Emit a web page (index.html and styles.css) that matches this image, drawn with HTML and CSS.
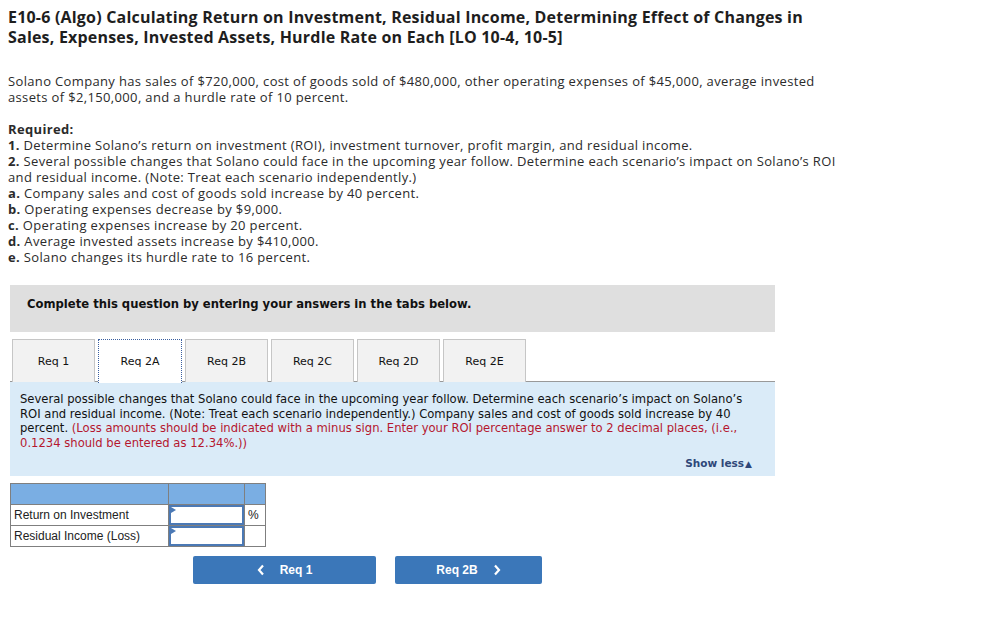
FILE: index.html
```html
<!DOCTYPE html>
<html>
<head>
<meta charset="utf-8">
<link rel="stylesheet" href="styles.css">
</head>
<body>
<h1 class="title">E10-6 (Algo) Calculating Return on Investment, Residual Income, Determining Effect of Changes in Sales, Expenses, Invested Assets, Hurdle Rate on Each [LO 10-4, 10-5]</h1>

<p class="intro">Solano Company has sales of $720,000, cost of goods sold of $480,000, other operating expenses of $45,000, average invested assets of $2,150,000, and a hurdle rate of 10 percent.</p>

<div class="required">
  <div class="req-head">Required:</div>
  <div><b>1.</b> Determine Solano’s return on investment (ROI), investment turnover, profit margin, and residual income.</div>
  <div><b>2.</b> Several possible changes that Solano could face in the upcoming year follow. Determine each scenario’s impact on Solano’s ROI and residual income. (Note: Treat each scenario independently.)</div>
  <div><b>a.</b> Company sales and cost of goods sold increase by 40 percent.</div>
  <div><b>b.</b> Operating expenses decrease by $9,000.</div>
  <div><b>c.</b> Operating expenses increase by 20 percent.</div>
  <div><b>d.</b> Average invested assets increase by $410,000.</div>
  <div><b>e.</b> Solano changes its hurdle rate to 16 percent.</div>
</div>

<div class="question">
  <div class="banner">Complete this question by entering your answers in the tabs below.</div>
  <div class="tabs">
    <div class="tab">Req 1</div>
    <div class="tab active">Req 2A</div>
    <div class="tab">Req 2B</div>
    <div class="tab">Req 2C</div>
    <div class="tab">Req 2D</div>
    <div class="tab">Req 2E</div>
  </div>
  <div class="panel">
    <p class="panel-text">Several possible changes that Solano could face in the upcoming year follow. Determine each scenario’s impact on Solano’s ROI and residual income. (Note: Treat each scenario independently.) Company sales and cost of goods sold increase by 40 percent. <span class="red">(Loss amounts should be indicated with a minus sign. Enter your ROI percentage answer to 2 decimal places, (i.e., 0.1234 should be entered as 12.34%.))</span></p>
    <div class="show-less">Show less<span class="tri">▲</span></div>
  </div>

  <table class="answers">
    <tr class="hdr"><td class="c1"></td><td class="c2"></td><td class="c3"></td></tr>
    <tr><td class="c1">Return on Investment</td><td class="c2"><div class="inp"></div></td><td class="c3">%</td></tr>
    <tr><td class="c1">Residual Income (Loss)</td><td class="c2"><div class="inp"></div></td><td class="c3"></td></tr>
  </table>

  <div class="nav">
    <div class="btn prev"><svg class="chev" width="8" height="12" viewBox="0 0 8 12"><path d="M6 1.5 L2 6 L6 10.5" fill="none" stroke="#fff" stroke-width="2.2"/></svg>Req 1</div>
    <div class="btn next">Req 2B<svg class="chev" width="8" height="12" viewBox="0 0 8 12"><path d="M2 1.5 L6 6 L2 10.5" fill="none" stroke="#fff" stroke-width="2.2"/></svg></div>
  </div>
</div>
</body>
</html>
```

FILE: styles.css
```css
html, body {
  margin: 0;
  background: #fff;
}
body {
  padding: 7px 8px 0 8px;
  font-family: "Open Sans", "Liberation Sans", sans-serif;
  color: #2b2b2b;
}
.title {
  margin: 0;
  font-size: 16px;
  line-height: 20px;
  font-weight: 700;
  color: #1e1e1e;
  letter-spacing: 0.2px;
  width: 820px;
}
.intro {
  margin: 26px 0 0 0;
  font-size: 13px;
  line-height: 16px;
  letter-spacing: 0.35px;
  width: 830px;
}
.required {
  margin-top: 16px;
  font-size: 13px;
  line-height: 16px;
  letter-spacing: 0.35px;
  width: 830px;
}
.req-head { font-weight: 700; }
.required b { font-weight: 700; }

.question {
  margin-top: 20px;
  margin-left: 2px;
  width: 765px;
  font-family: "DejaVu Sans", Verdana, sans-serif;
}
.banner {
  background: #dfdfdf;
  height: 47px;
  box-sizing: border-box;
  padding: 11px 0 0 17px;
  font-size: 11.6px;
  font-weight: 700;
  color: #111;
  line-height: 16px;
}
.tabs {
  display: flex;
  gap: 3px;
  margin-top: 7px;
  padding-left: 2px;
  border-bottom: 1px solid #999;
  height: 42px;
}
.tab {
  width: 83px;
  box-sizing: border-box;
  height: 43px;
  background: #f2f2f2;
  border: 1px solid #c6c6c6;
  border-bottom: none;
  font-size: 11px;
  color: #111;
  display: flex;
  align-items: center;
  justify-content: center;
  padding-top: 1px;
}
.tab.active {
  background: #fff;
  border: 1px dotted #3a5fa0;
  border-bottom: none;
  height: 44px;
  padding-top: 0;
  padding-bottom: 1px;
  position: relative;
  z-index: 1;
  width: 84px;
}
.panel {
  background: #daebf8;
  height: 94px;
  box-sizing: border-box;
  padding: 10px 10px 0 10px;
  position: relative;
}
.panel-text {
  margin: 0;
  font-size: 11.6px;
  line-height: 14.5px;
  color: #111;
}
.red { color: #b5172f; }
.show-less {
  position: absolute;
  right: 23px;
  bottom: 7px;
  font-size: 10.5px;
  font-weight: 700;
  color: #2e4778;
}
.tri { font-size: 9px; margin-left: 1px; }

.answers {
  margin-top: 7px;
  border-collapse: collapse;
  font-family: "Liberation Sans", Arial, sans-serif;
  font-size: 12px;
  color: #222;
}
.answers td {
  border: 1px solid #7f7f7f;
  height: 20px;
  padding: 0;
}
.answers .hdr td {
  background: #7aaee3;
}
.answers .c1 { width: 154px; padding-left: 3px; }
.answers .c2 { width: 75px; padding: 0; }
.answers .c3 { width: 17px; padding-left: 3px; }
.inp {
  height: 16px;
  border: 2px solid #4b79b5;
  margin: 0;
  position: relative;
  background: #fff;
}
.inp::before {
  content: "";
  position: absolute;
  left: 0;
  top: 0;
  border-left: 5px solid #4b79b5;
  border-top: 3px solid transparent;
  border-bottom: 3px solid transparent;
}

.nav {
  display: flex;
  margin-top: 9px;
  margin-left: 183px;
  gap: 19px;
  font-family: "Liberation Sans", Arial, sans-serif;
}
.btn {
  background: #3b77b9;
  color: #fff;
  font-weight: 700;
  font-size: 12px;
  height: 28px;
  border-radius: 2px;
  display: flex;
  align-items: center;
  justify-content: center;
}
.btn.prev { width: 183px; }
.btn.next { width: 147px; }
.prev .chev { margin-right: 15px; }
.next .chev { margin-left: 15px; }
```
